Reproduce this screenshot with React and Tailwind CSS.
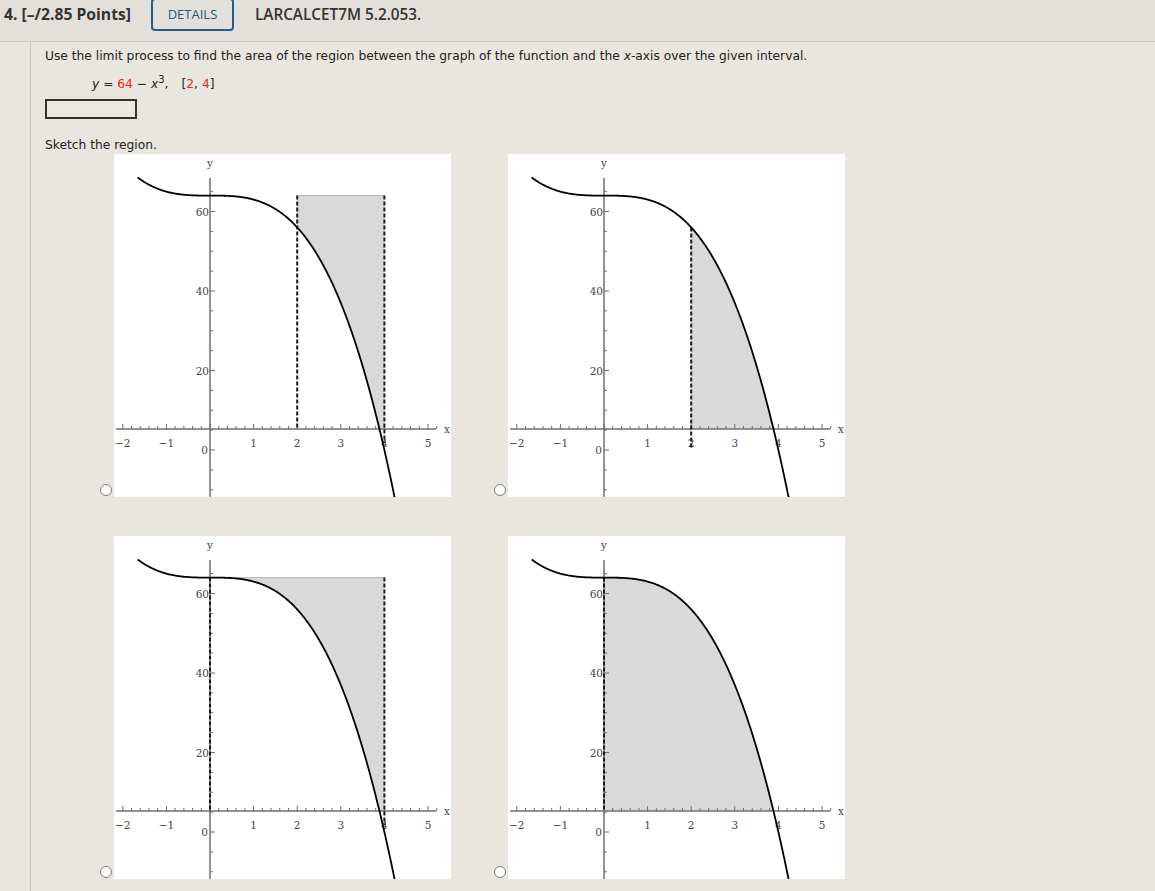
import React from "react";

const W = 337;
const H = 343;
const X = (x) => 96 + 43.6 * x;
const Y = (y) => 296 - 3.975 * y;
const AX = 275; // x-axis pixel row
const f = (x) => 64 - x * x * x;
const XC = Math.cbrt(64 - (296 - AX) / 3.975); // where curve meets axis row

function curvePts(a, b, step = 0.02) {
  const pts = [];
  for (let x = a; x < b; x += step) pts.push([X(x), Y(f(x))]);
  pts.push([X(b), Y(f(b))]);
  return pts;
}
const toD = (pts) => pts.map((p, i) => (i ? "L" : "M") + p[0].toFixed(2) + " " + p[1].toFixed(2)).join(" ");
const toPoly = (pts) => pts.map((p) => p[0].toFixed(2) + "," + p[1].toFixed(2)).join(" ");

function Graph({ variant }) {
  const curve = toD(curvePts(-1.66, 4.24));
  let fill = null;
  let dashes = [];
  let topLine = null;
  if (variant === 1) {
    const c = curvePts(2, XC).reverse();
    fill = [[X(2), Y(64)], [X(4), Y(64)], [X(4), AX], [X(XC), AX], ...c];
    dashes = [[X(2), Y(64), AX], [X(4), Y(64), AX + 14]];
    topLine = [X(2), X(4)];
  } else if (variant === 2) {
    const c = curvePts(2, XC);
    fill = [[X(2), AX], ...c, [X(XC), AX]];
    dashes = [[X(2), Y(f(2)), 294]];
  } else if (variant === 3) {
    const c = curvePts(0, XC).reverse();
    fill = [[X(0), Y(64)], [X(4), Y(64)], [X(4), AX], [X(XC), AX], ...c];
    dashes = [[X(0), Y(64), AX], [X(4), Y(64), AX + 14]];
    topLine = [X(0), X(4)];
  } else {
    const c = curvePts(0, XC);
    fill = [[X(0), AX], ...c, [X(XC), AX]];
    dashes = [[X(0), Y(64), AX]];
  }

  const xTicks = [];
  for (let i = -10; i <= 26; i++) {
    const v = i / 5;
    const major = i % 5 === 0;
    xTicks.push(
      <line key={"xt" + i} x1={X(v)} x2={X(v)} y1={AX} y2={AX - (major ? 5 : 3)} stroke="#6f6f6f" strokeWidth="1" />
    );
  }
  const yTicks = [];
  for (let v = -10; v <= 65; v += 5) {
    const major = v % 20 === 0;
    yTicks.push(
      <line key={"yt" + v} x1={96} x2={96 + (major ? 5 : 3)} y1={Y(v)} y2={Y(v)} stroke="#6f6f6f" strokeWidth="1" />
    );
  }
  const serif = { fontFamily: '"DejaVu Serif", "Liberation Serif", serif', fontSize: "10.5px" };

  return (
    <svg width={W} height={H} viewBox={`0 0 ${W} ${H}`} className="block bg-white">
      <polygon points={toPoly(fill)} fill="#d9d9d9" />
      {topLine && <line x1={topLine[0]} x2={topLine[1]} y1={Y(64)} y2={Y(64)} stroke="#b5b5b5" strokeWidth="1" />}
      <line x1={2} x2={322} y1={AX} y2={AX} stroke="#6f6f6f" strokeWidth="1.5" />
      <line x1={96} x2={96} y1={24} y2={H} stroke="#6f6f6f" strokeWidth="1.5" />
      {xTicks}
      {yTicks}
      <g style={serif} fill="#444">
        <text x={96} y={13} textAnchor="middle">y</text>
        <text x={333} y={279} textAnchor="middle">x</text>
        {[60, 40, 20].map((v) => (
          <text key={v} x={95} y={Y(v) + 4} textAnchor="end">{v}</text>
        ))}
        <text x={94} y={Y(0) + 4} textAnchor="end">0</text>
        {[-2, -1, 1, 2, 3, 4, 5].map((v) => (
          <text key={v} x={X(v)} y={293} textAnchor="middle">{v < 0 ? "\u2212" + Math.abs(v) : v}</text>
        ))}
      </g>
      {dashes.map((d, i) => (
        <line key={"d" + i} x1={d[0]} x2={d[0]} y1={d[1]} y2={d[2]} stroke="#1a1a1a" strokeWidth="2" strokeDasharray="4 2" />
      ))}
      <path d={curve} fill="none" stroke="#000" strokeWidth="1.8" />
    </svg>
  );
}

function Option({ variant }) {
  return (
    <div className="flex items-end gap-[2px]">
      <span className="mb-[1px] block h-[12px] w-[12px] rounded-full border border-[#7a7a7a] bg-white" />
      <Graph variant={variant} />
    </div>
  );
}

export default function App() {
  const sans = { fontFamily: '"DejaVu Sans", Verdana, sans-serif' };
  const head = { fontFamily: '"Open Sans", "Liberation Sans", sans-serif' };
  return (
    <div className="min-h-[891px] w-[1155px] bg-[#e9e6e0] text-[#222]">
      <div className="flex h-[42px] items-start border-b border-[#cdc9c3] bg-[#e3e0db]" style={head}>
        <div className="mt-[3px] pl-[4px] text-[15.7px] font-bold text-[#333]">4. [–/2.85 Points]</div>
        <div className="-mt-[2px] ml-[20px] flex h-[33px] w-[83px] items-center justify-center rounded-[4px] border-2 border-[#1f5f8d] text-[13px] text-[#275878]">
          DETAILS
        </div>
        <div className="ml-[21px] mt-[3px] text-[15.3px] font-semibold text-[#333]">LARCALCET7M 5.2.053.</div>
      </div>
      <div className="flex min-h-[849px]">
        <div className="w-[31px] shrink-0 border-r border-[#c9c5bf]" />
        <div className="pl-[14px] pt-[7px] text-[12.25px] leading-[15px]" style={sans}>
          <p>
            Use the limit process to find the area of the region between the graph of the function and the <i>x</i>-axis over the given interval.
          </p>
          <p className="ml-[47px] mt-[13px]">
            <i>y</i> = <span className="text-[#e8202a]">64</span> − <i>x</i>
            <sup className="text-[10px]">3</sup>,<span className="inline-block w-[13px]" />[<span className="text-[#e8202a]">2</span>,{" "}
            <span className="text-[#e8202a]">4</span>]
          </p>
          <div className="mt-[7px] h-[20px] w-[92px] border-2 border-[#333] bg-[#ebe8e3]" />
          <p className="mt-[19px]">Sketch the region.</p>
          <div className="ml-[55px] mt-[1px] grid grid-cols-[351px_351px] gap-x-[43px] gap-y-[39px]">
            <Option variant={1} />
            <Option variant={2} />
            <Option variant={3} />
            <Option variant={4} />
          </div>
        </div>
      </div>
    </div>
  );
}
